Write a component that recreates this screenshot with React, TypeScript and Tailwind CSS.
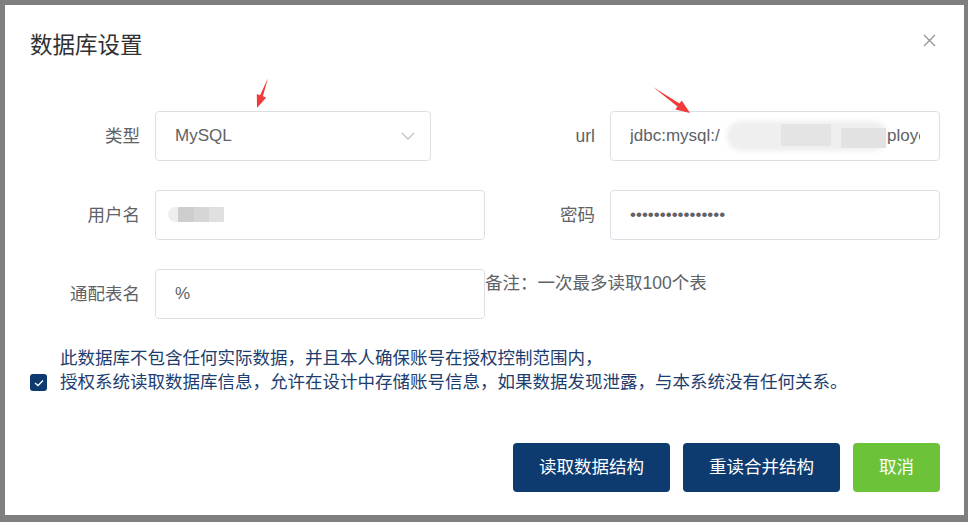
const font = { fontFamily: '"Liberation Sans", "Noto Sans CJK SC", sans-serif' };

function Field({ label, children }: { label: string; children: React.ReactNode }) {
  return (
    <div className="flex items-center">
      <div className="w-[125px] shrink-0 pr-[15px] text-right text-[17.5px] text-[#606266]">{label}</div>
      {children}
    </div>
  );
}

function Box({ children, className = "" }: { children?: React.ReactNode; className?: string }) {
  return (
    <div
      className={`relative flex h-[50px] items-center rounded-[4px] border border-[#dcdfe6] bg-white px-[19px] text-[17px] text-[#606266] ${className}`}
    >
      {children}
    </div>
  );
}

export default function App() {
  return (
    <div className="h-[522px] w-[968px] bg-[#7f7f7f] pl-[5px] pt-[5px] pr-[4px] pb-[7px]" style={font}>
      <div className="relative flex h-full w-full flex-col bg-white pl-[25px] pr-[24px] pt-[26px]">
        <div className="flex items-start justify-between">
          <h1 className="text-[22.5px] leading-[30px] text-[#303133]">数据库设置</h1>
          <svg className="mr-[4px] mt-[3px]" width="13" height="13" viewBox="0 0 13 13">
            <path d="M1 1L12 12M12 1L1 12" stroke="#909399" strokeWidth="1.3" fill="none" />
          </svg>
        </div>

        <div className="mt-[50px] grid grid-cols-2 gap-y-[29px]">
          <Field label="类型">
            <Box className="w-[276px] justify-between">
              <span>MySQL</span>
              <svg width="14" height="8" viewBox="0 0 14 8" className="mr-[-4px]">
                <path d="M1 1L7 7L13 1" stroke="#c0c4cc" strokeWidth="1.3" fill="none" />
              </svg>
            </Box>
          </Field>
          <Field label="url">
            <Box className="w-[330px] overflow-hidden">
              <div className="overflow-hidden whitespace-nowrap">jdbc:mysql:/</div>
              <div className="absolute left-[116px] top-[9px] h-[30px] w-[160px] rounded-[14px] bg-[#efefef] blur-[2px]" />
              <div className="absolute left-[170px] top-[12px] h-[22px] w-[50px] bg-[#e4e4e4]" />
              <div className="absolute left-[230px] top-[16px] h-[20px] w-[45px] bg-[#e2e2e2]" />
              <div className="absolute left-[276px] right-[19px] top-[12px] overflow-hidden whitespace-nowrap leading-[24px]">
                ployee
              </div>
            </Box>
          </Field>
          <Field label="用户名">
            <Box className="w-[330px]">
              <div className="absolute left-[12px] top-[16px] h-[15px] w-[10px] rounded-l-full bg-[#eeeeee]" />
              <div className="absolute left-[22px] top-[16px] h-[15px] w-[16px] bg-[#cdcdcd]" />
              <div className="absolute left-[38px] top-[16px] h-[15px] w-[15px] bg-[#d6d6d6]" />
              <div className="absolute left-[53px] top-[16px] h-[15px] w-[15px] bg-[#e0e0e0]" />
            </Box>
          </Field>
          <Field label="密码">
            <Box className="w-[330px]">
              <span className="text-[17px]">••••••••••••••••</span>
            </Box>
          </Field>
          <Field label="通配表名">
            <Box className="w-[330px]">%</Box>
          </Field>
          <div className="pt-[2px] text-[17.5px] leading-[24px] text-[#606266]">备注：一次最多读取100个表</div>
        </div>

        <div className="mt-[27px] flex items-end gap-[13px] text-[17.5px] leading-[24px] text-[#1c3d6e]">
          <div className="mb-[3px] flex h-[17px] w-[17px] shrink-0 items-center justify-center rounded-[3px] bg-[#0d3b70]">
            <svg width="10" height="8" viewBox="0 0 10 8">
              <path d="M1 4L4 6.5L9 1.5" stroke="white" strokeWidth="1.3" fill="none" />
            </svg>
          </div>
          <div>
            <div>此数据库不包含任何实际数据，并且本人确保账号在授权控制范围内，</div>
            <div>授权系统读取数据库信息，允许在设计中存储账号信息，如果数据发现泄露，与本系统没有任何关系。</div>
          </div>
        </div>

        <div className="mt-[49px] flex justify-end gap-[13px] text-[17.5px] text-white">
          <button className="h-[49px] w-[157px] rounded-[4px] bg-[#0d3b70]">读取数据结构</button>
          <button className="h-[49px] w-[157px] rounded-[4px] bg-[#0d3b70]">重读合并结构</button>
          <button className="h-[49px] w-[87px] rounded-[4px] bg-[#6cc33a]">取消</button>
        </div>
      </div>

      <svg className="pointer-events-none absolute left-0 top-0" width="968" height="522">
        <polygon points="268,78 262.9,96.3 266.2,97.5 257,108 256.8,94.1 260.1,95.3" fill="#f23a3a" />
        <polygon points="653,87 677.5,106.4 675.3,109.5 690,113 681.7,100.4 679.5,103.5" fill="#f23a3a" />
      </svg>
    </div>
  );
}
